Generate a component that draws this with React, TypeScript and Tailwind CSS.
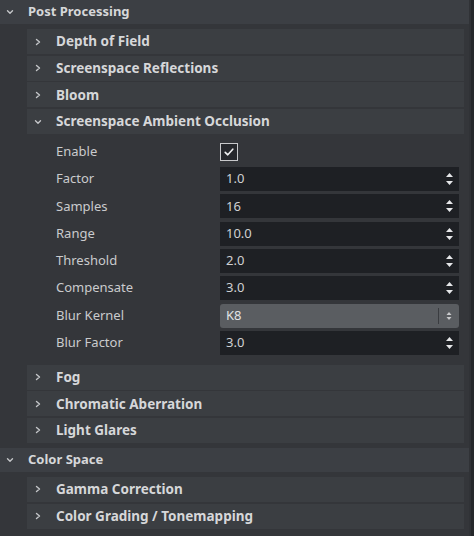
import React from "react";

const font = { fontFamily: '"Noto Sans", "Open Sans", sans-serif' };

function ChevronRight() {
  return (
    <svg width="8" height="8" viewBox="0 0 8 8" className="shrink-0">
      <path d="M2.5 1.5 L5.5 4 L2.5 6.5" fill="none" stroke="#c4c6c9" strokeWidth="1.4" strokeLinecap="round" strokeLinejoin="round" />
    </svg>
  );
}

function ChevronDown() {
  return (
    <svg width="8" height="8" viewBox="0 0 8 8" className="shrink-0">
      <path d="M1.5 2.8 L4 5.3 L6.5 2.8" fill="none" stroke="#c4c6c9" strokeWidth="1.4" strokeLinecap="round" strokeLinejoin="round" />
    </svg>
  );
}

function Spin() {
  return (
    <svg width="9" height="14" viewBox="0 0 9 14" className="shrink-0">
      <path d="M4.5 1 L8 5 L1 5 Z" fill="#e6e7e9" />
      <path d="M4.5 13 L8 9 L1 9 Z" fill="#e6e7e9" />
    </svg>
  );
}

function SubRow({ label, open }: { label: string; open?: boolean }) {
  return (
    <div className="h-[25px] bg-[#3b3e42] flex items-center">
      <div className="w-[29px] flex justify-start pl-[7px]">{open ? <ChevronDown /> : <ChevronRight />}</div>
      <span className="text-[13.5px] font-bold text-[#d6d7d9]">{label}</span>
    </div>
  );
}

function SectionHeader({ label }: { label: string }) {
  return (
    <div className="h-[24px] bg-[#3c3f44] flex items-center">
      <div className="w-[28px] flex justify-start pl-[6px]">
        <ChevronDown />
      </div>
      <span className="text-[13px] font-bold text-[#d6d7d9]">{label}</span>
    </div>
  );
}

function NumberField({ value }: { value: string }) {
  return (
    <div className="h-[24px] bg-[#1e2024] flex items-center justify-between pl-[6px] pr-[5px]">
      <span className="text-[13px] text-[#d0d1d3]">{value}</span>
      <Spin />
    </div>
  );
}

function Combo({ value }: { value: string }) {
  return (
    <div className="h-[24px] bg-[#5a5d61] rounded-[3px] flex items-center pl-[6px] pr-[4px]">
      <span className="text-[13px] text-[#e2e3e5] flex-1">{value}</span>
      <div className="w-px h-[16px] bg-[#3a3c40] mr-[6px]" />
      <svg width="8" height="12" viewBox="0 0 8 12" className="mr-[2px]">
        <path d="M4 2 L6.5 5 L1.5 5 Z" fill="#c9cacc" />
        <path d="M4 10 L6.5 7 L1.5 7 Z" fill="#c9cacc" />
      </svg>
    </div>
  );
}

function PropRow({ label, children }: { label: string; children: React.ReactNode }) {
  return (
    <div className="flex items-center h-[24px]">
      <span className="w-[164px] text-[13px] text-[#cacbcd]">{label}</span>
      <div className="flex-1">{children}</div>
    </div>
  );
}

export default function App() {
  return (
    <div className="w-[474px] h-[536px] bg-[#34363a] flex overflow-hidden" style={font}>
      <div className="w-[469px] flex flex-col">
        <SectionHeader label="Post Processing" />
        <div className="bg-[#34363a] pl-[27px] pr-[5px] pt-[5px] pb-[5px] flex flex-col gap-[1.7px]">
          <SubRow label="Depth of Field" />
          <SubRow label="Screenspace Reflections" />
          <SubRow label="Bloom" />
          <SubRow label="Screenspace Ambient Occlusion" open />
          <div className="pl-[29px] pr-[5px] pt-[4px] pb-[8px] flex flex-col gap-[3.3px]">
            <PropRow label="Enable">
              <div className="w-[18px] h-[18px] border-[1.5px] border-[#c8c9cb] bg-[#26282c] flex items-center justify-center">
                <svg width="12" height="12" viewBox="0 0 12 12">
                  <path d="M2.2 6.3 L4.8 8.8 L9.8 3.2" fill="none" stroke="#eeeff0" strokeWidth="1.6" strokeLinecap="round" strokeLinejoin="round" />
                </svg>
              </div>
            </PropRow>
            <PropRow label="Factor"><NumberField value="1.0" /></PropRow>
            <PropRow label="Samples"><NumberField value="16" /></PropRow>
            <PropRow label="Range"><NumberField value="10.0" /></PropRow>
            <PropRow label="Threshold"><NumberField value="2.0" /></PropRow>
            <PropRow label="Compensate"><NumberField value="3.0" /></PropRow>
            <PropRow label="Blur Kernel"><Combo value="K8" /></PropRow>
            <PropRow label="Blur Factor"><NumberField value="3.0" /></PropRow>
          </div>
          <SubRow label="Fog" />
          <SubRow label="Chromatic Aberration" />
          <SubRow label="Light Glares" />
        </div>
        <SectionHeader label="Color Space" />
        <div className="bg-[#34363a] pl-[27px] pr-[5px] pt-[5px] pb-[5px] flex flex-col gap-[1.7px]">
          <SubRow label="Gamma Correction" />
          <SubRow label="Color Grading / Tonemapping" />
        </div>
      </div>
      <div className="w-[5px] flex">
        <div className="w-[2px] bg-[#303236]" />
        <div className="w-[3px] bg-[#26282b]" />
      </div>
    </div>
  );
}
